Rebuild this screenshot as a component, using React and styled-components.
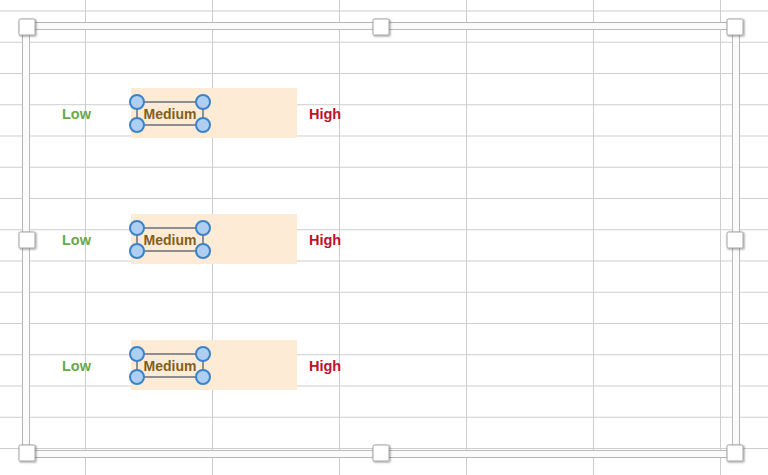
import React from 'react';
import styled, { createGlobalStyle } from 'styled-components';

const GlobalStyle = createGlobalStyle`
	html, body {
		margin: 0;
		padding: 0;
		background: #ffffff;
	}
	body {
		font-family: 'Liberation Sans', Arial, sans-serif;
	}
`;

const Sheet = styled.div`
	position: relative;
	width: 768px;
	height: 475px;
	overflow: hidden;
	background-color: #ffffff;
	background-image: linear-gradient(to right, #cdcdcd 1px, transparent 1px),
		linear-gradient(to bottom, #cdcdcd 1px, transparent 1px);
	background-size: 127px 31.25px;
	background-position: 85px 10.5px;
`;

const Frame = styled.div`
	position: absolute;
	left: 22px;
	top: 22px;
	width: 718px;
	height: 436px;
	box-sizing: border-box;
	border: 1px solid #b5b5b5;
	box-shadow: inset 0 0 0 6px #fbfbfb, inset 0 0 0 7px #bababa;
	display: flex;
	flex-direction: column;
	gap: 76px;
	padding-top: 65px;
`;

const Handle = styled.span`
	position: absolute;
	left: ${({ x }) => x};
	top: ${({ y }) => y};
	width: 15px;
	height: 15px;
	transform: translate(-50%, -50%);
	background: #ffffff;
	border: 1px solid #a4a4a4;
	border-radius: 2px;
	box-shadow: 1px 1px 2px rgba(0, 0, 0, 0.25);
`;

const Row = styled.div`
	display: flex;
	align-items: center;
	height: 50px;
	padding-left: 39px;
`;

const Label = styled.span`
	font-size: 14.5px;
	font-weight: bold;
	padding-top: 2px;
	color: ${({ tone }) => tone};
	width: ${({ w }) => w || 'auto'};
	margin-left: ${({ ml }) => ml || '0'};
`;

const Bar = styled.div`
	display: flex;
	align-items: center;
	width: 166px;
	height: 50px;
	padding-left: 5px;
	box-sizing: border-box;
	background: #fdebd6;
`;

const ValueBox = styled.div`
	position: relative;
	display: flex;
	align-items: center;
	justify-content: center;
	width: 68px;
	height: 25px;
	padding-top: 2px;
	box-sizing: border-box;
	border: 2px solid #8e8e8e;
	font-size: 14px;
	font-weight: bold;
	color: #7e5f22;
`;

const Dot = styled.span`
	position: absolute;
	left: ${({ x }) => x};
	top: ${({ y }) => y};
	width: 12px;
	height: 12px;
	transform: translate(-50%, -50%);
	border-radius: 50%;
	background: #aecff1;
	border: 2px solid #3a82c9;
`;

const corners = [
	['-1px', '-1px'],
	['calc(100% + 1px)', '-1px'],
	['-1px', 'calc(100% + 1px)'],
	['calc(100% + 1px)', 'calc(100% + 1px)'],
];

const frameHandles = [
	['4px', '4px'],
	['50%', '4px'],
	['calc(100% - 4px)', '4px'],
	['4px', '50%'],
	['calc(100% - 4px)', '50%'],
	['4px', 'calc(100% - 4px)'],
	['50%', 'calc(100% - 4px)'],
	['calc(100% - 4px)', 'calc(100% - 4px)'],
];

const ScaleRow = () => (
	<Row>
		<Label tone="#6aa84a" w="69px">
			Low
		</Label>
		<Bar>
			<ValueBox>
				Medium
				{corners.map(([x, y]) => (
					<Dot key={x + y} x={x} y={y} />
				))}
			</ValueBox>
		</Bar>
		<Label tone="#c0112b" ml="12px">
			High
		</Label>
	</Row>
);

const App = () => {
	return (
		<>
			<GlobalStyle />
			<Sheet>
				<Frame>
					<ScaleRow />
					<ScaleRow />
					<ScaleRow />
					{frameHandles.map(([x, y]) => (
						<Handle key={x + y} x={x} y={y} />
					))}
				</Frame>
			</Sheet>
		</>
	);
};

export default App;
